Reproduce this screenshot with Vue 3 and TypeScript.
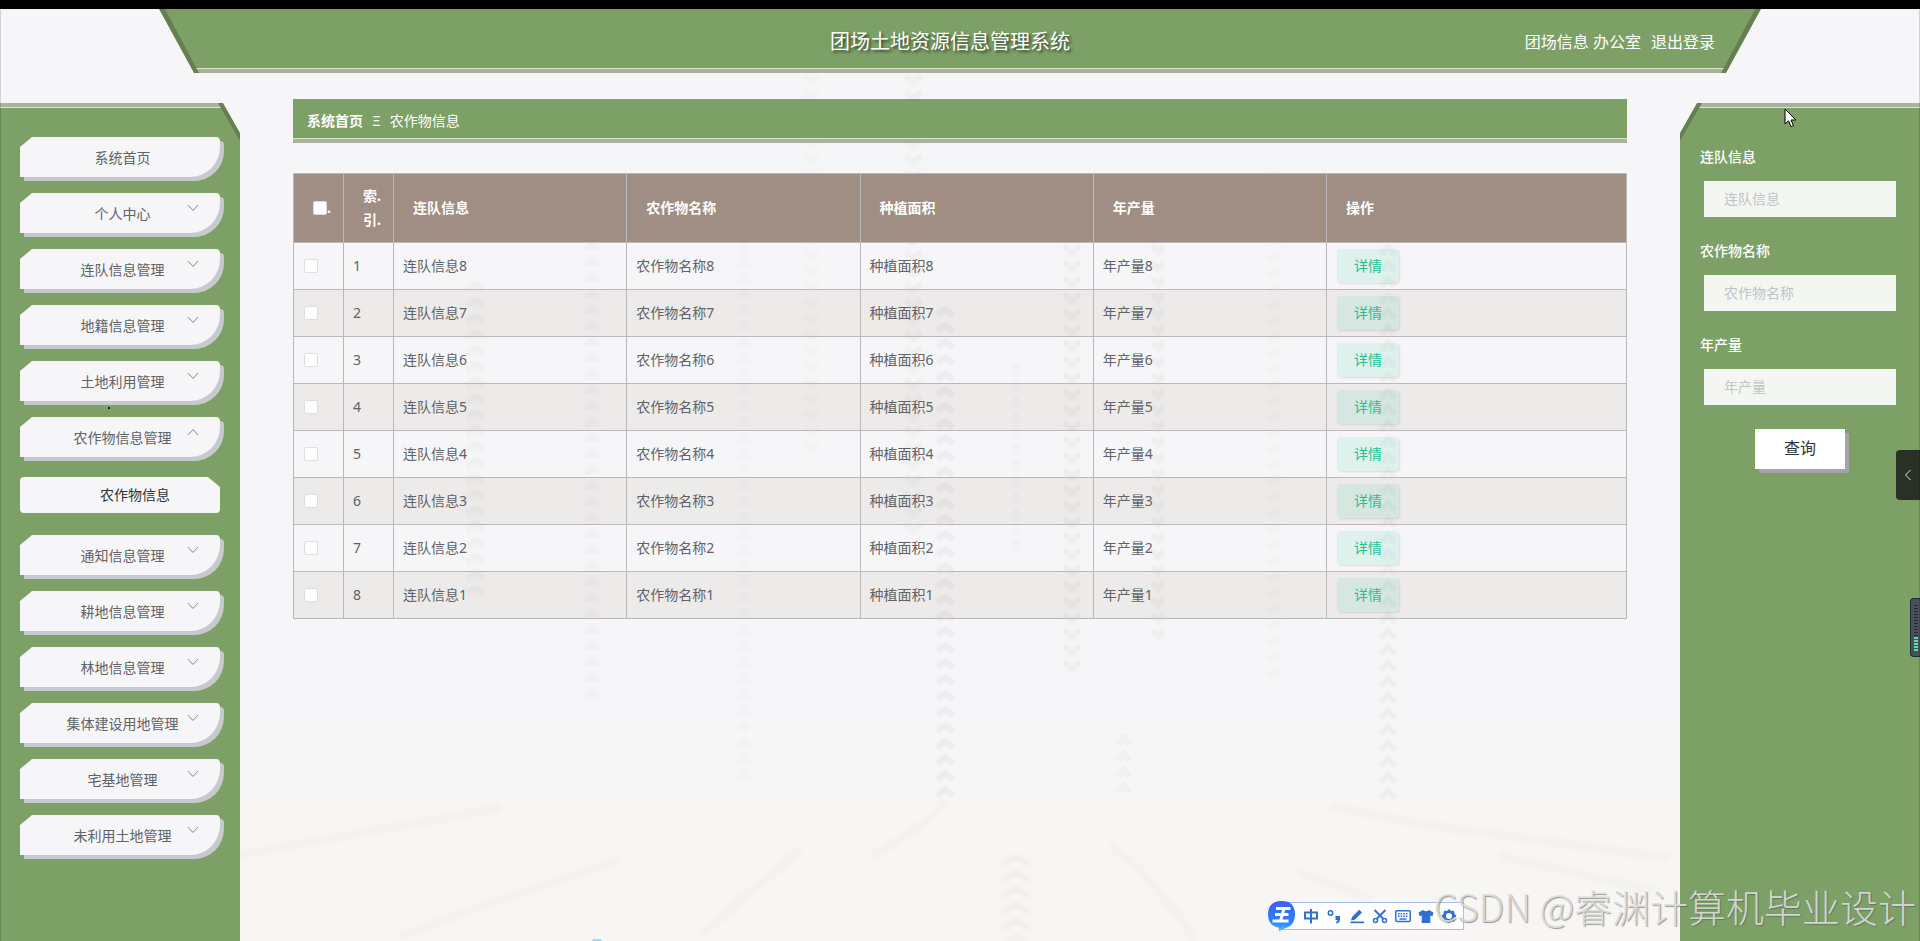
<script setup lang="ts">
import { ref } from 'vue'

interface MenuItem {
  label: string
  open?: boolean
  leaf?: boolean
  children?: string[]
}

interface CropRow {
  id: number
  no: number
}

interface Track {
  d: string
  o: number
}

const menu: MenuItem[] = [
  { label: '系统首页', leaf: true },
  { label: '个人中心' },
  { label: '连队信息管理' },
  { label: '地籍信息管理' },
  { label: '土地利用管理' },
  { label: '农作物信息管理', open: true, children: ['农作物信息'] },
  { label: '通知信息管理' },
  { label: '耕地信息管理' },
  { label: '林地信息管理' },
  { label: '集体建设用地管理' },
  { label: '宅基地管理' },
  { label: '未利用土地管理' },
]

const rows: CropRow[] = Array.from({ length: 8 }, (_, i) => ({ id: i + 1, no: 8 - i }))

const fields = ['连队信息', '农作物名称', '年产量']
const query = ref<string[]>(['', '', ''])

/* Vertical tyre tracks: a stack of small chevrons */
const chevrons = (x: number, from: number, to: number, dir: number, w = 8): string => {
  let d = ''
  for (let y = from; y < to; y += 16) {
    d += `M${x - w} ${y + 4 * dir}L${x} ${y - 3 * dir}L${x + w} ${y + 4 * dir}`
  }
  return d
}

const tracks: Track[] = [
  { d: chevrons(475, 286, 600, 1), o: 0.04 },
  { d: chevrons(592, 246, 700, 1, 6), o: 0.035 },
  { d: chevrons(744, 246, 790, 1, 4), o: 0.02 },
  { d: chevrons(811, 80, 450, -1, 7), o: 0.025 },
  { d: chevrons(913, 80, 540, -1), o: 0.04 },
  { d: chevrons(945, 312, 804, 1), o: 0.05 },
  { d: chevrons(1016, 370, 550, 1, 5), o: 0.02 },
  { d: chevrons(1072, 250, 680, -1), o: 0.055 },
  { d: chevrons(1158, 250, 650, -1, 6), o: 0.045 },
  { d: chevrons(1275, 176, 680, 1, 6), o: 0.025 },
  { d: chevrons(1388, 250, 800, 1, 7), o: 0.045 },
  { d: chevrons(1124, 740, 800, 1, 6), o: 0.035 },
  { d: chevrons(1016, 860, 941, 1, 13), o: 0.04 },
]

const trails: string[] = [
  'M240 855L500 808',
  'M400 936L500 900L620 860',
  'M700 936L745 896L800 850',
  'M945 800Q936 820 872 856',
  'M1110 846Q1150 872 1196 941',
  'M1298 872L1370 898',
  'M1500 856L1660 892',
  'M1330 806L1420 824L1670 858',
]
</script>

<template>
  <div class="page">
    <svg class="scene" viewBox="0 0 1920 941" preserveAspectRatio="xMidYMin slice" aria-hidden="true">
      <path v-for="(t, i) in tracks" :key="i" :d="t.d" :stroke-opacity="t.o" class="track" />
      <path v-for="(t, i) in trails" :key="'t' + i" :d="t" class="trail" />
    </svg>

    <header class="top">
      <div class="top-face">
        <h1 class="title">团场土地资源信息管理系统</h1>
        <nav class="account">
          <span>团场信息 办公室</span>
          <a href="#logout">退出登录</a>
        </nav>
      </div>
    </header>

    <div class="body">
      <aside class="side left">
        <ul class="menu">
          <li v-for="m in menu" :key="m.label" class="menu-item">
            <div class="menu-shape">
              <button type="button" class="menu-btn">
                <span class="menu-label">{{ m.label }}</span>
                <svg v-if="!m.leaf" class="arrow" viewBox="0 0 12 8" aria-hidden="true">
                  <path :d="m.open ? 'M1 7L6 1.5L11 7' : 'M1 1L6 6.5L11 1'" />
                </svg>
              </button>
            </div>
            <a v-for="c in m.children" :key="c" href="#crops" class="sub">{{ c }}</a>
          </li>
        </ul>
      </aside>

      <main class="main">
        <nav class="crumbs">
          <strong>系统首页</strong>
          <span class="sep">Ξ</span>
          <span>农作物信息</span>
        </nav>

        <table class="grid">
          <colgroup>
            <col class="c-narrow" />
            <col class="c-narrow" />
            <col class="c-data" />
            <col class="c-data" />
            <col class="c-data" />
            <col class="c-data" />
            <col />
          </colgroup>
          <thead>
            <tr>
              <th>
                <span class="pick-all"><input type="checkbox" aria-label="全选" />.</span>
              </th>
              <th>索.<br />引.</th>
              <th>连队信息</th>
              <th>农作物名称</th>
              <th>种植面积</th>
              <th>年产量</th>
              <th>操作</th>
            </tr>
          </thead>
          <tbody>
            <tr v-for="r in rows" :key="r.id">
              <td><input type="checkbox" :aria-label="'选择' + r.id" /></td>
              <td>{{ r.id }}</td>
              <td>连队信息{{ r.no }}</td>
              <td>农作物名称{{ r.no }}</td>
              <td>种植面积{{ r.no }}</td>
              <td>年产量{{ r.no }}</td>
              <td><button type="button" class="detail">详情</button></td>
            </tr>
          </tbody>
        </table>
      </main>

      <aside class="side right">
        <form class="search" @submit.prevent>
          <div v-for="(f, i) in fields" :key="f" class="field">
            <label :for="'q' + i">{{ f }}</label>
            <input :id="'q' + i" v-model="query[i]" type="text" :placeholder="f" />
          </div>
          <button type="submit" class="go">查询</button>
        </form>
      </aside>
    </div>

    <button type="button" class="drawer" aria-label="展开">
      <svg viewBox="0 0 8 12" aria-hidden="true"><path d="M6.5 1L1.5 6L6.5 11" /></svg>
    </button>

    <div class="meter" aria-hidden="true">
      <i class="meter-off"></i>
      <i class="meter-on"></i>
    </div>

    <div class="ime">
      <svg class="ime-logo" viewBox="0 0 28 31" aria-hidden="true">
        <defs>
          <linearGradient id="imeBlue" x1="0" y1="0" x2="0" y2="1">
            <stop offset="0" stop-color="#3a5cff" />
            <stop offset="0.7" stop-color="#2f82fb" />
            <stop offset="1" stop-color="#4cc4ff" />
          </linearGradient>
        </defs>
        <path
          d="M14 0C22.500 0 27 4.500 27 13C27 21 23.500 25.500 18 27C15 28 14 28.500 10.500 30.500Q11.500 28 10.500 26.500C4 26 0 21 0 13C0 4.500 5 0 14 0Z"
          fill="url(#imeBlue)"
        />
        <path d="M8 7.500H22.500M7 13.500H20.500M4.500 20H20.500M16 7.500L12.500 20" fill="none" stroke="#fff" stroke-width="2.800" />
      </svg>
      <svg class="ime-icon" viewBox="0 0 16 16" aria-hidden="true">
        <path d="M2 4.500H14V10.500H2ZM8 1V15.500" class="line" />
      </svg>
      <svg class="ime-icon" viewBox="0 0 16 16" aria-hidden="true">
        <circle cx="4.500" cy="5" r="2.200" class="line thin" />
        <path d="M9.500 8H14V11.500Q14 14.500 10.500 15.500L10 14Q11.600 13.200 11.800 12H9.500Z" class="solid" />
      </svg>
      <svg class="ime-icon" viewBox="0 0 16 16" aria-hidden="true">
        <path d="M2 12.500L3 9L10.200 1.800L13 4.600L5.800 11.800ZM2 13.500H15V15.200H1Z" class="solid" />
      </svg>
      <svg class="ime-icon" viewBox="0 0 16 16" aria-hidden="true">
        <path d="M2.500 2L11.500 11M13.500 2L4.500 11" class="line" />
        <circle cx="3.500" cy="12.500" r="2" class="line thin" />
        <circle cx="12.500" cy="12.500" r="2" class="line thin" />
      </svg>
      <svg class="ime-icon" viewBox="0 0 16 16" aria-hidden="true">
        <rect x="0.800" y="2.800" width="14.400" height="10.800" rx="1" class="line thin" />
        <path d="M3 5.800H13M3 8.300H13" class="line thin dots" />
        <path d="M4.500 11H11.500" class="line thin" />
      </svg>
      <svg class="ime-icon" viewBox="0 0 16 16" aria-hidden="true">
        <path d="M5 2Q8 4.500 11 2L15.500 4.500L14.500 8L12.300 7.800V15H3.700V7.800L1.500 8L0.500 4.500Z" class="solid" />
      </svg>
      <svg class="ime-icon" viewBox="0 0 16 16" aria-hidden="true">
        <path
          d="M8 1L10 3L13 2.800L13.500 5.800L15.500 8L13.500 10.200L13 13.200L10 13L8 15L6 13L3 13.200L2.500 10.200L0.500 8L2.500 5.800L3 2.800L6 3ZM8 5A3 3 0 1 0 8 11A3 3 0 1 0 8 5Z"
          fill-rule="evenodd"
          class="solid"
        />
      </svg>
    </div>

    <div class="mark">CSDN @睿渊计算机毕业设计</div>

    <i class="speck"></i>
    <i class="bubble"></i>
    <svg class="cursor" viewBox="0 0 13 20" aria-hidden="true">
      <path d="M1 1V16L4.500 12.800L7 18.600L9.500 17.500L7 12H11.800Z" fill="#fff" stroke="#000" stroke-width="1" />
    </svg>
  </div>
</template>

<style>
html,
body {
  margin: 0;
  background: #f6f6f8;
}
</style>

<style scoped>
.page {
  --green: #7da067;
  --dark: #64804f;
  --edge: #a9b19c;
  --hair: #d6e6c8;
  position: relative;
  display: flex;
  flex-direction: column;
  min-height: 100vh;
  overflow: hidden;
  background: linear-gradient(#f6f6f8 0, #f6f6f8 76%, #f7f6f5 86%, #f7f6f5 100%);
  font-family: 'Noto Sans', 'Noto Sans CJK SC', sans-serif;
  font-size: 14px;
  line-height: 24px;
  color: #606266;
}
.page,
.page * {
  box-sizing: border-box;
}
.page::after {
  content: '';
  position: absolute;
  inset: 0;
  border: solid rgba(0, 0, 0, 0.14);
  border-width: 0 1px;
  pointer-events: none;
}
button,
input {
  margin: 0;
  font: inherit;
}
a {
  color: inherit;
  text-decoration: none;
}
.scene {
  position: absolute;
  inset: 0;
  width: 100%;
  height: 100%;
  fill: none;
  stroke: #4a4038;
  filter: blur(1px);
}
.track {
  stroke-width: 6;
}
.trail {
  stroke-width: 9;
  stroke-opacity: 0.025;
}

/* Header */
.top {
  position: relative;
  border-top: 9px solid #000;
}
.top-face {
  position: relative;
  display: grid;
  grid-template-columns: 1fr auto 1fr;
  align-items: center;
  height: 64px;
  margin: 0 159px;
  padding: 1px 46px 0 26px;
  background: var(--dark);
  clip-path: polygon(0 0, 100% 0, calc(100% - 35px) 100%, 35px 100%);
  color: #fff;
}
.top-face::before {
  content: '';
  position: absolute;
  inset: 0;
  background: linear-gradient(to top, var(--edge) 4px, var(--hair) 4px, var(--hair) 5px, var(--green) 5px);
  clip-path: polygon(6px 0, calc(100% - 6px) 0, calc(100% - 40px) 100%, 40px 100%);
}
.title {
  position: relative;
  grid-column: 2;
  margin: 0;
  font-size: 20px;
  font-weight: 400;
  text-shadow: 2px 2px 3px rgba(0, 0, 0, 0.6);
}
.account {
  position: relative;
  display: flex;
  justify-content: flex-end;
  gap: 10px;
  font-size: 16px;
}

/* Columns */
.body {
  position: relative;
  display: flex;
  flex: 1;
  align-items: stretch;
}
.side {
  position: relative;
  flex: 0 0 240px;
  min-width: 0;
  margin-top: 30px;
  padding: 0 20px;
  background: var(--dark);
}
.side::before {
  content: '';
  position: absolute;
  inset: 0;
  background: linear-gradient(var(--edge) 4px, var(--hair) 4px, var(--hair) 5px, var(--green) 5px);
}
.left {
  clip-path: polygon(0 0, calc(100% - 17px) 0, 100% 30px, 100% 100%, 0 100%);
}
.left::before {
  clip-path: polygon(0 0, calc(100% - 22px) 0, 100% 38px, 100% 100%, 0 100%);
}
.right {
  clip-path: polygon(17px 0, 100% 0, 100% 100%, 0 100%, 0 30px);
}
.right::before {
  clip-path: polygon(22px 0, 100% 0, 100% 100%, 0 100%, 0 38px);
}

/* Menu */
.menu {
  position: relative;
  display: flex;
  flex-direction: column;
  gap: 16px;
  margin: 0;
  padding: 34px 0;
  list-style: none;
}
.menu-shape {
  clip-path: polygon(12px 0, calc(100% + 4px) 0, calc(100% + 4px) calc(100% + 4px), 0 calc(100% + 4px), 0 10px);
}
.menu-btn {
  display: grid;
  grid-template-columns: 1fr auto 1fr;
  align-items: center;
  width: 100%;
  height: 40px;
  padding: 2px 21px 0 26px;
  border: 0;
  border-radius: 0 4px 30px 0;
  background: #f6f6f8;
  box-shadow: 4px 4px 0 #c8c9cc;
  color: #606266;
  white-space: nowrap;
}
.menu-label {
  grid-column: 2;
}
.arrow {
  justify-self: end;
  width: 12px;
  height: 8px;
  margin-bottom: 12px;
  fill: none;
  stroke: #85878b;
  stroke-width: 1;
}
.sub {
  display: block;
  height: 36px;
  margin: 20px 0 6px;
  padding-left: 30px;
  border-radius: 4px;
  background: #f6f6f8;
  clip-path: polygon(0 0, calc(100% - 12px) 0, 100% 10px, 100% 100%, 0 100%);
  color: #303133;
  line-height: 36px;
  text-align: center;
}

/* Content */
.main {
  flex: 1;
  min-width: 0;
  padding: 26px 53px 0;
}
.crumbs {
  display: flex;
  align-items: center;
  gap: 9px;
  height: 44px;
  margin-bottom: 30px;
  padding: 0 14px;
  background: linear-gradient(to top, var(--edge) 4px, var(--hair) 4px, var(--hair) 5px, var(--green) 5px);
  color: #fff;
}
.grid {
  width: 100%;
  border-collapse: collapse;
  table-layout: fixed;
}
.c-narrow {
  width: 50px;
}
.c-data {
  width: 17.5%;
}
th,
td {
  border: 1px solid #bcb8ba;
  text-align: left;
}
th {
  height: 69px;
  padding: 0 0 0 19px;
  background: #a08d84;
  color: #fff;
  font-weight: 700;
}
td {
  height: 47px;
  padding: 0 9px;
}
tbody tr:nth-child(even) {
  background: rgba(160, 141, 132, 0.11);
}
input[type='checkbox'] {
  display: block;
  width: 14px;
  height: 14px;
  border: 1px solid #dcdfe6;
  border-radius: 2px;
  background: #fff;
  appearance: none;
}
td input[type='checkbox'] {
  margin-left: 1px;
}
.pick-all {
  display: flex;
  align-items: center;
}
.detail {
  display: block;
  width: 62px;
  height: 34px;
  margin-left: 1px;
  padding: 0;
  border: 0;
  border-radius: 4px;
  background: rgba(46, 204, 160, 0.12);
  box-shadow: 1px 1px 2px rgba(0, 0, 0, 0.1);
  color: #25c195;
}

/* Search form */
.search {
  position: relative;
  display: flex;
  flex-direction: column;
  gap: 22px;
  padding-top: 42px;
}
.field {
  display: flex;
  flex-direction: column;
  gap: 12px;
}
.field label {
  color: #fff;
  font-weight: 500;
}
.field input {
  min-width: 0;
  height: 36px;
  margin: 0 4px;
  padding: 0 20px 2px;
  border: 0;
  border-radius: 0;
  background: #f4f6f1;
  color: #606266;
}
.field input::placeholder {
  color: #c0c4cc;
  opacity: 1;
}
.go {
  align-self: center;
  width: 90px;
  height: 40px;
  margin-top: 2px;
  padding: 0 0 2px;
  border: 0;
  background: #fff;
  box-shadow: 4px 4px 0 #a5a5a7;
  color: #333;
  font-size: 16px;
}

/* Floating pieces */
.drawer {
  position: absolute;
  top: 450px;
  right: 0;
  display: grid;
  place-items: center;
  width: 24px;
  height: 50px;
  padding: 0;
  border: 0;
  border-radius: 4px 0 0 4px;
  background: #293025;
}
.drawer svg {
  width: 8px;
  height: 12px;
  fill: none;
  stroke: #e4e6e2;
  stroke-width: 1;
}
.meter {
  position: absolute;
  top: 598px;
  right: 0;
  width: 10px;
  height: 59px;
  padding: 6px 2px 6px 3px;
  border: 1px solid #20272e;
  border-right: 0;
  border-radius: 4px 0 0 4px;
  background: #47515c;
}
.meter i {
  display: block;
}
.meter-off {
  height: 32px;
  background: repeating-linear-gradient(#222a33 0 1px, transparent 1px 3px);
}
.meter-on {
  height: 14px;
  background: repeating-linear-gradient(#63d8a8 0 2px, transparent 2px 3px);
}
.ime {
  position: absolute;
  right: 456px;
  bottom: 11px;
  display: flex;
  align-items: center;
  gap: 7px;
  height: 28px;
  padding-right: 7px;
  background: linear-gradient(#fff, #fff) 14px 0 no-repeat;
}
.ime::before {
  content: '';
  position: absolute;
  inset: 0 0 0 14px;
  border: 1px solid #a9bdea;
}
.ime-logo {
  position: relative;
  width: 28px;
  height: 31px;
}
.ime-icon {
  position: relative;
  width: 16px;
  height: 16px;
}
.line {
  fill: none;
  stroke: #2f70d2;
  stroke-width: 2;
}
.thin {
  stroke-width: 1.5;
}
.dots {
  stroke-dasharray: 1.6 1;
}
.solid {
  fill: #2f70d2;
}
.mark {
  position: absolute;
  right: 4px;
  bottom: 7px;
  color: rgba(222, 224, 222, 0.9);
  font-family: 'Noto Sans CJK SC', sans-serif;
  font-size: 38px;
  font-weight: 300;
  line-height: 56px;
  text-shadow: 1px 1px 1px rgba(90, 90, 90, 0.6);
  white-space: nowrap;
}
.speck {
  position: absolute;
  top: 407px;
  left: 108px;
  width: 2px;
  height: 2px;
  background: #1c2616;
}
.bubble {
  position: absolute;
  bottom: 0;
  left: 592px;
  width: 10px;
  height: 2px;
  border-radius: 5px 5px 0 0;
  background: #a6d6f5;
}
.cursor {
  position: absolute;
  top: 108px;
  left: 1784px;
  width: 13px;
  height: 20px;
}
</style>
